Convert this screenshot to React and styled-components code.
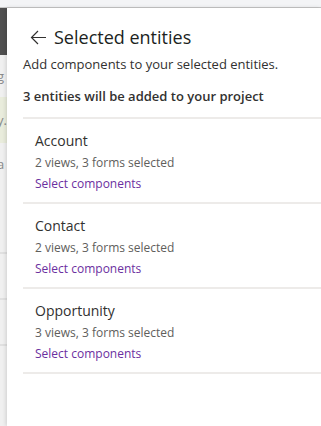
import React from "react";
import styled, { createGlobalStyle } from "styled-components";

const GlobalStyle = createGlobalStyle`
  html, body {
    margin: 0;
    padding: 0;
    background: #ffffff;
    font-family: "Segoe UI", "Open Sans", "Noto Sans", sans-serif;
  }
`;

const Page = styled.div`
  width: 321px;
  height: 426px;
  display: flex;
  flex-direction: column;
  overflow: hidden;
`;

const TopBar = styled.div`
  height: 7px;
  background: #f3f4f6;
  border-bottom: 1px solid #c6c6c6;
  flex-shrink: 0;
`;

const Body = styled.div`
  flex: 1;
  display: flex;
  min-height: 0;
`;

const BackPage = styled.div`
  width: 7px;
  flex-shrink: 0;
  display: flex;
  flex-direction: column;
  background: #f0f0f0;
  overflow: hidden;
`;

const BackBlock = styled.div`
  height: ${(p) => p.$h}px;
  background: ${(p) => p.$bg || "transparent"};
  border-bottom: ${(p) => (p.$line ? "2px solid #e0e0e0" : "none")};
  color: #8a8a8a;
  font-size: 13px;
  line-height: ${(p) => p.$h}px;
  white-space: nowrap;
  text-indent: -3px;
  flex-shrink: 0;
`;

const Panel = styled.div`
  flex: 1;
  background: #ffffff;
  padding: 0 0 0 16px;
  box-shadow: -1px 0 4px rgba(0, 0, 0, 0.14);
  position: relative;
`;

const Header = styled.div`
  display: flex;
  align-items: center;
  gap: 7px;
  margin: 18px 0 0 7px;
  height: 22px;
`;

const BackButton = styled.button`
  border: none;
  background: none;
  padding: 0;
  width: 17px;
  height: 17px;
  display: flex;
  align-items: center;
  justify-content: center;
  color: #323130;
  cursor: pointer;
`;

const Title = styled.h1`
  margin: 0;
  font-size: 18px;
  font-weight: 400;
  color: #201f1e;
  line-height: 22px;
`;

const Subtitle = styled.p`
  margin: 7px 0 0 0;
  font-size: 13px;
  color: #323130;
  line-height: 18px;
`;

const Summary = styled.p`
  margin: 14px 0 0 0;
  font-size: 13px;
  font-weight: 600;
  color: #323130;
  line-height: 18px;
`;

const List = styled.ul`
  list-style: none;
  margin: 12px 0 0 0;
  padding: 0;
  border-top: 2px solid #edebe9;
`;

const Item = styled.li`
  height: 85px;
  border-bottom: 2px solid #edebe9;
  padding: 12px 0 0 12px;
  box-sizing: border-box;
`;

const EntityName = styled.div`
  font-size: 14px;
  color: #323130;
  line-height: 20px;
`;

const Meta = styled.div`
  margin-top: 4px;
  font-size: 12px;
  color: #605e5c;
  line-height: 16px;
`;

const SelectLink = styled.a`
  display: inline-block;
  margin-top: 3px;
  font-size: 12px;
  color: #6b2fa0;
  line-height: 16px;
  text-decoration: none;
  cursor: pointer;
`;

const entities = [
  { name: "Account", views: 2, forms: 3 },
  { name: "Contact", views: 2, forms: 3 },
  { name: "Opportunity", views: 3, forms: 3 },
];

export default function App() {
  return (
    <Page>
      <GlobalStyle />
      <TopBar />
      <Body>
        <BackPage>
          <BackBlock $h={47} $bg="#505050" />
          <BackBlock $h={42}>g</BackBlock>
          <BackBlock $h={46} $bg="#e9ecdc">y.</BackBlock>
          <BackBlock $h={42}>a</BackBlock>
          <BackBlock $h={67} $line />
          <BackBlock $h={44} $line />
          <BackBlock $h={44} $line />
        </BackPage>
        <Panel>
          <Header>
            <BackButton aria-label="Back">
              <svg width="17" height="17" viewBox="0 0 17 17" fill="none">
                <path d="M16 8.5H1.5M8 2L1.5 8.5L8 15" stroke="#323130" strokeWidth="1.2" />
              </svg>
            </BackButton>
            <Title>Selected entities</Title>
          </Header>
          <Subtitle>Add components to your selected entities.</Subtitle>
          <Summary>3 entities will be added to your project</Summary>
          <List>
            {entities.map((e) => (
              <Item key={e.name}>
                <EntityName>{e.name}</EntityName>
                <Meta>
                  {e.views} views, {e.forms} forms selected
                </Meta>
                <SelectLink>Select components</SelectLink>
              </Item>
            ))}
          </List>
        </Panel>
      </Body>
    </Page>
  );
}
